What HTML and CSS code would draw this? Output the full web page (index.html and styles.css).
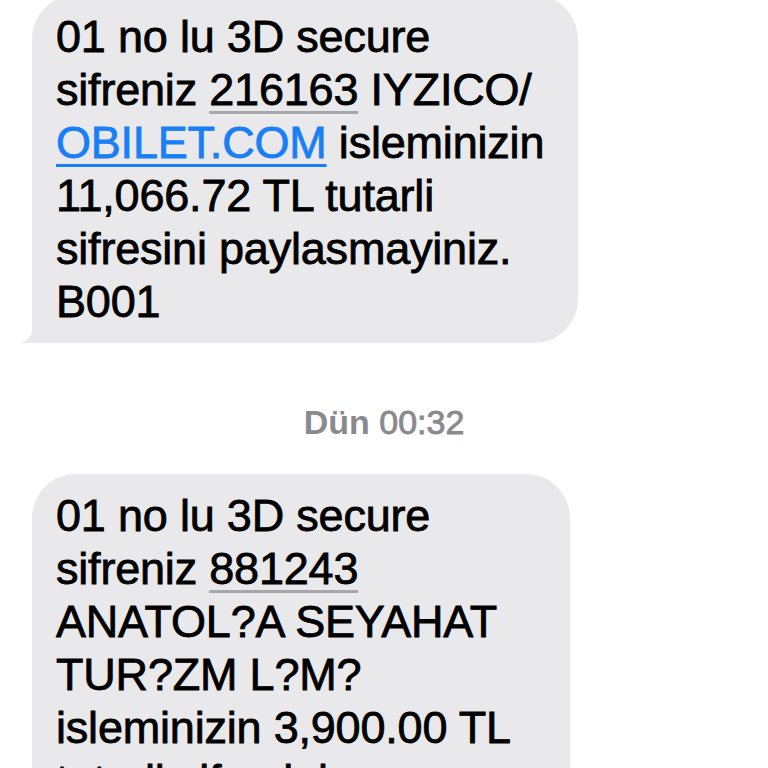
FILE: index.html
```html
<!DOCTYPE html>
<html lang="tr">
<head>
    <meta charset="UTF-8">
    <meta name="viewport" content="width=device-width, initial-scale=1.0">
    <title>Mesajlar</title>
    <link rel="stylesheet" href="styles.css">
</head>
<body>
    <div class="conversacion">
        <div class="burbuja burbuja-uno cola">
            01 no lu 3D secure<br>
            sifreniz <span class="codigo">216163</span> IYZICO/<br>
            <a class="enlace" href="#">OBILET.COM</a> isleminizin<br>
            11,066.72 TL tutarli<br>
            sifresini paylasmayiniz.<br>
            B001
        </div>

        <div class="fecha"><b>Dün</b> <span class="hora">00:32</span></div>

        <div class="burbuja burbuja-dos">
            01 no lu 3D secure<br>
            sifreniz <span class="codigo">881243</span><br>
            ANATOL?A SEYAHAT<br>
            TUR?ZM L?M?<br>
            isleminizin 3,900.00 TL<br>
            tutarli sifresini<br>
            paylasmayiniz. B001
        </div>
    </div>
</body>
</html>
```

FILE: styles.css
```css
/* Conversación SMS estilo iOS */
body {
    background-color: #ffffff;
    color: #000000;
    font-family: 'Liberation Sans', Arial, sans-serif;
    margin: 0;
    padding: 0;
    overflow: hidden;
}

.conversacion {
    margin-top: -5px;
    padding-left: 32px;
}

.burbuja {
    position: relative;
    box-sizing: border-box;
    background-color: #e9e9eb;
    border-radius: 44px;
    padding: 15px 30px 15px 24px;
    font-size: 45px;
    line-height: 53px;
    letter-spacing: -0.2px;
    white-space: nowrap;
    -webkit-text-stroke: 0.8px currentColor; /* trazo algo más grueso, como en iOS */
}

.burbuja-uno {
    width: 546px;
}

.burbuja-dos {
    width: 538px;
}

/* Cola de la burbuja (abajo a la izquierda) */
.cola {
    border-bottom-left-radius: 0;
}

.cola::before {
    content: "";
    position: absolute;
    bottom: 0;
    left: -10px;
    width: 30px;
    height: 34px;
    background-color: #e9e9eb;
    border-bottom-right-radius: 24px 20px;
}

.cola::after {
    content: "";
    position: absolute;
    bottom: 0;
    left: -36px;
    width: 36px;
    height: 36px;
    background-color: #ffffff;
    border-bottom-right-radius: 14px;
}

.codigo {
    text-decoration: underline;
    text-decoration-color: #a7a7ab;
    text-decoration-thickness: 3px;
    text-underline-offset: 6px;
}

.enlace {
    color: #1a7ff5;
    text-decoration: underline;
    text-decoration-thickness: 3px;
    text-underline-offset: 6px;
}

.fecha {
    text-align: center;
    color: #8a8a8e;
    font-size: 34px;
    line-height: 40px;
    margin: 59px 0 32px -32px;
}

.fecha b {
    font-weight: bold;
}

.hora {
    -webkit-text-stroke: 0.9px currentColor;
}
```
